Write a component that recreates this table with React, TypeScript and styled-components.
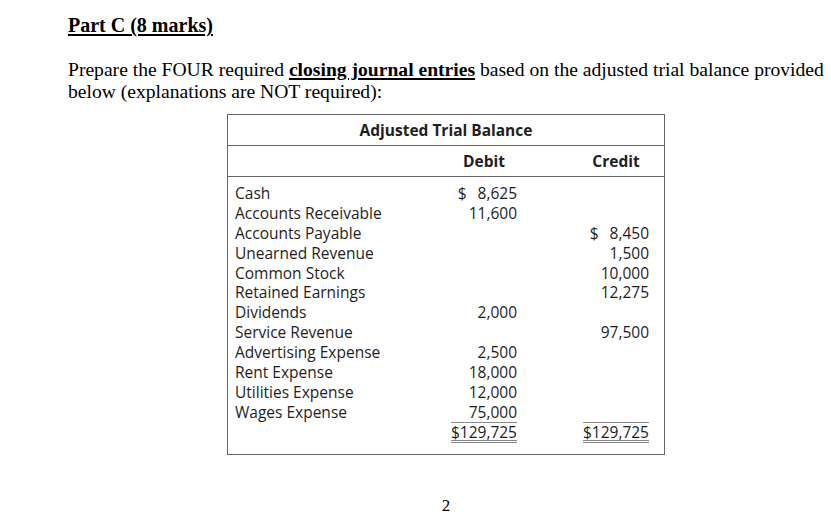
import styled, { createGlobalStyle } from "styled-components";

const GlobalStyle = createGlobalStyle`
  html, body {
    margin: 0;
    padding: 0;
    background: #ffffff;
  }
  body {
    font-family: "Liberation Serif", "Times New Roman", serif;
    color: #000;
  }
`;

const Page = styled.div`
  width: 756px;
  margin-left: 68px;
  padding-top: 14px;
  display: flex;
  flex-direction: column;
`;

const Heading = styled.h2`
  margin: 0;
  font-size: 20px;
  line-height: 22px;
  font-weight: bold;
  text-decoration: underline;
  text-decoration-thickness: 2px;
  text-underline-offset: 2px;
`;

const Prompt = styled.p`
  margin: 23px 0 0;
  font-size: 19.6px;
  line-height: 22px;
  white-space: nowrap;

  b {
    text-decoration: underline;
    text-decoration-thickness: 2px;
    text-underline-offset: 2px;
  }
`;

const Table = styled.div`
  align-self: center;
  margin-top: 11px;
  width: 436px;
  border: 1px solid #666;
  font-family: "Open Sans", "Noto Sans", sans-serif;
  color: #1e1e1e;
  font-size: 15.5px;
`;

const TitleRow = styled.div`
  height: 30px;
  display: flex;
  align-items: center;
  justify-content: center;
  font-weight: bold;
  border-bottom: 1px solid #666;
`;

const Grid = styled.div`
  display: grid;
  grid-template-columns: 1fr 66px 66px 66px;
  padding: 0 15px 0 7px;
`;

const HeaderGrid = styled(Grid)`
  height: 30px;
  align-items: center;
  font-weight: bold;
  border-bottom: 1px solid #666;
`;

const BodyGrid = styled(Grid)<{ $rows: number }>`
  padding-top: 6px;
  padding-bottom: 11px;
  grid-template-rows: repeat(${(p) => p.$rows}, 19.9px) auto;
  align-items: center;
`;

const HeadCell = styled.div<{ $col: number }>`
  grid-column: ${(p) => p.$col};
  text-align: center;
`;

const Label = styled.div`
  grid-column: 1;
  white-space: nowrap;
`;

const Amount = styled.div<{ $col: number }>`
  grid-column: ${(p) => p.$col};
  display: flex;
  justify-content: flex-end;
  white-space: nowrap;
`;

const Total = styled(Amount)`
  align-self: start;
  line-height: 15px;
  padding-top: 2px;
  border-top: 1px solid #8a8a8a;
  border-bottom: 3px double #8a8a8a;
`;

const Dollar = styled.span<{ $gap: number }>`
  margin-right: ${(p) => p.$gap}px;
`;

const PageNumber = styled.div`
  align-self: center;
  margin-top: 41px;
  font-size: 17px;
  line-height: 20px;
`;

type Row = { label: string; debit?: string; credit?: string };

const rows: Row[] = [
  { label: "Cash", debit: "$|8,625" },
  { label: "Accounts Receivable", debit: "11,600" },
  { label: "Accounts Payable", credit: "$|8,450" },
  { label: "Unearned Revenue", credit: "1,500" },
  { label: "Common Stock", credit: "10,000" },
  { label: "Retained Earnings", credit: "12,275" },
  { label: "Dividends", debit: "2,000" },
  { label: "Service Revenue", credit: "97,500" },
  { label: "Advertising Expense", debit: "2,500" },
  { label: "Rent Expense", debit: "18,000" },
  { label: "Utilities Expense", debit: "12,000" },
  { label: "Wages Expense", debit: "75,000" },
];

function Money({ value }: { value: string }) {
  if (value.startsWith("$|")) {
    return (
      <>
        <Dollar $gap={11}>$</Dollar>
        {value.slice(2)}
      </>
    );
  }
  return <>{value}</>;
}

export default function App() {
  return (
    <>
      <GlobalStyle />
      <Page>
        <Heading>Part C (8 marks)</Heading>
        <Prompt>
          Prepare the FOUR required <b>closing journal entries</b> based on the adjusted trial balance provided
          <br />
          below (explanations are NOT required):
        </Prompt>
        <Table>
          <TitleRow>Adjusted Trial Balance</TitleRow>
          <HeaderGrid>
            <HeadCell $col={2}>Debit</HeadCell>
            <HeadCell $col={4}>Credit</HeadCell>
          </HeaderGrid>
          <BodyGrid $rows={rows.length}>
            {rows.map((r) => (
              <>
                <Label key={r.label}>{r.label}</Label>
                {r.debit && (
                  <Amount $col={2}>
                    <Money value={r.debit} />
                  </Amount>
                )}
                {r.credit && (
                  <Amount $col={4}>
                    <Money value={r.credit} />
                  </Amount>
                )}
              </>
            ))}
            <Label />
            <Total $col={2}>$129,725</Total>
            <Total $col={4}>$129,725</Total>
          </BodyGrid>
        </Table>
        <PageNumber>2</PageNumber>
      </Page>
    </>
  );
}
